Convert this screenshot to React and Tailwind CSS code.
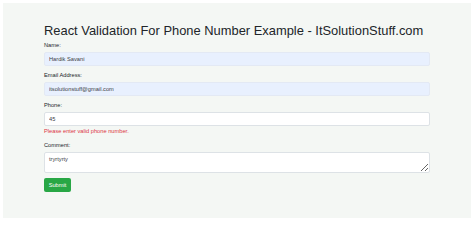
import { useState } from 'react';

export default function App() {
  const [form, setForm] = useState({
    name: 'Hardik Savani',
    email: 'itsolutionstuff@gmail.com',
    phone: '45',
    comment: 'tryrtyrty',
  });

  const phoneValido = /^[0-9]{10}$/.test(form.phone);

  const inputBase =
    'block w-full h-[14px] rounded-[2px] border px-[4px] text-[5.7px] text-[#3b4046] outline-none';

  return (
    <div className="min-h-screen bg-white p-[3px] font-['Liberation_Sans',Arial,sans-serif]">
      <div className="h-[215px] bg-[#f4f7f4] px-[41px] pt-[20px]">
        <h1 className="text-[12.9px] leading-[16px] text-[#212529] mb-[2px] whitespace-nowrap">
          React Validation For Phone Number Example - ItSolutionStuff.com
        </h1>

        <form onSubmit={(e) => e.preventDefault()}>
          <div className="mb-[5px]">
            <label className="block text-[5.7px] leading-[8px] text-[#212529] mb-[3px]">Name:</label>
            <input
              type="text"
              className={`${inputBase} bg-[#e8f0fe] border-[#e3e9f4]`}
              value={form.name}
              onChange={(e) => setForm({ ...form, name: e.target.value })}
            />
          </div>

          <div className="mb-[5px]">
            <label className="block text-[5.7px] leading-[8px] text-[#212529] mb-[3px]">Email Address:</label>
            <input
              type="text"
              className={`${inputBase} bg-[#e8f0fe] border-[#e3e9f4]`}
              value={form.email}
              onChange={(e) => setForm({ ...form, email: e.target.value })}
            />
          </div>

          <div className="mb-[5px]">
            <label className="block text-[5.7px] leading-[8px] text-[#212529] mb-[3px]">Phone:</label>
            <input
              type="text"
              className={`${inputBase} bg-white border-[#dde2e6]`}
              value={form.phone}
              onChange={(e) => setForm({ ...form, phone: e.target.value })}
            />
            {!phoneValido && (
              <div className="text-[5.7px] leading-[8px] text-[#dc3545] mt-[1px]">Please enter valid phone number.</div>
            )}
          </div>

          <div className="mb-[5px] mt-[6px]">
            <label className="block text-[5.7px] leading-[8px] text-[#212529] mb-[3px]">Comment:</label>
            <textarea
              className="block w-full h-[21px] rounded-[2px] border border-[#dde2e6] bg-white px-[4px] py-[2px] text-[5.7px] leading-[8px] text-[#3b4046] outline-none"
              value={form.comment}
              onChange={(e) => setForm({ ...form, comment: e.target.value })}
            />
          </div>

          <button
            type="submit"
            className="block h-[14px] w-[27px] rounded-[2px] bg-[#28a745] text-[5.7px] text-white"
          >
            Submit
          </button>
        </form>
      </div>
    </div>
  );
}
